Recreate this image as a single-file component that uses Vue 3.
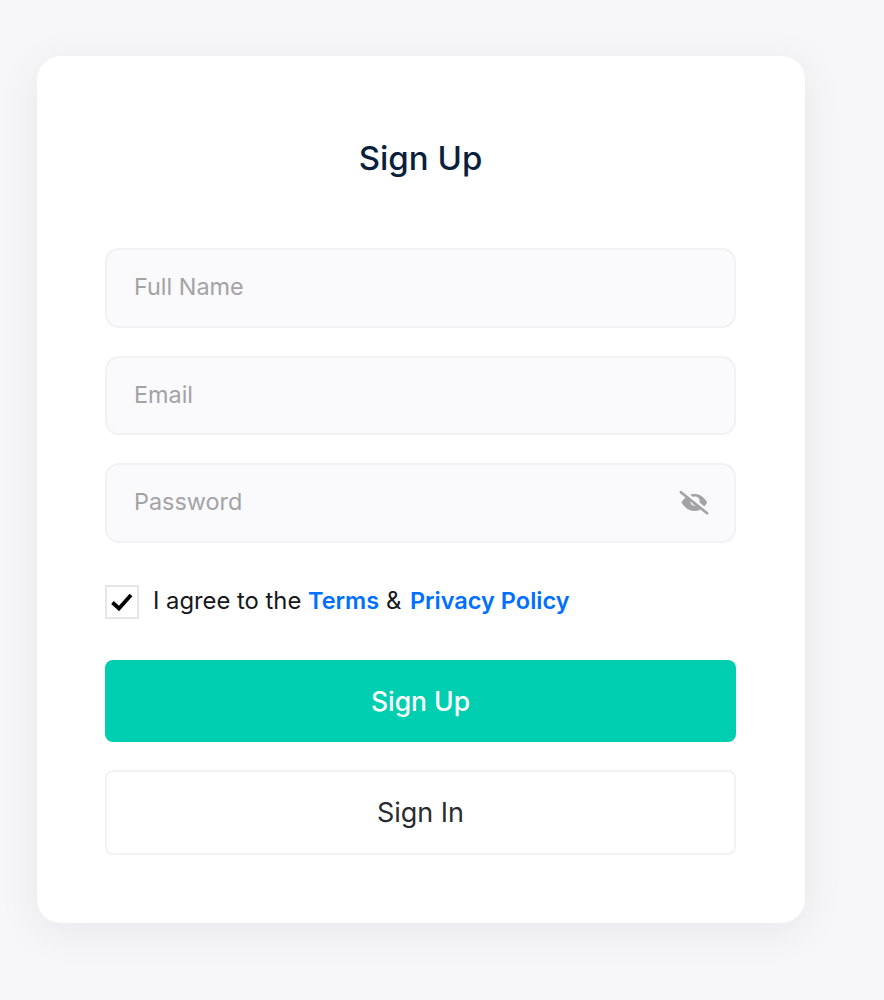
<template>
  <div class="page">
    <form class="card" @submit.prevent>
      <h1 class="card__title">Sign Up</h1>

      <div v-for="field in fields" :key="field" class="field">
        <span class="field__placeholder">{{ field }}</span>
        <!-- Eye-off icon on the password field -->
        <svg
          v-if="field === 'Password'"
          class="field__icon"
          viewBox="0 0 32 26"
          aria-hidden="true"
        >
          <path
            d="M2.500 13C7 6.500 11 4 16.500 4S26 6.500 30 13C26 19.500 22 22 16.500 22S7 19.500 2.500 13Z"
            fill="#a3a3a6"
          />
          <circle cx="17" cy="11.500" r="5" fill="#fafafc" />
          <circle cx="17" cy="13" r="2.600" fill="#a3a3a6" />
          <path d="M4 0 31 22.500" stroke="#fafafc" stroke-width="3" />
          <path d="M2 2 30 24.500" stroke="#a3a3a6" stroke-width="2.800" stroke-linecap="round" />
        </svg>
      </div>

      <label class="agree">
        <span class="agree__box">
          <svg viewBox="0 0 22 18" aria-hidden="true">
            <path d="M1.500 9.500 8 15.500 20 2" fill="none" stroke="#000" stroke-width="3.800" />
          </svg>
        </span>
        <span class="agree__text">I agree to the <a class="agree__link">Terms</a> &amp; <a class="agree__link">Privacy Policy</a></span>
      </label>

      <button type="submit" class="btn btn--primary">Sign Up</button>
      <button type="button" class="btn btn--outline">Sign In</button>
    </form>
  </div>
</template>

<script setup>
const fields = ['Full Name', 'Email', 'Password']
</script>

<style>
html,
body {
  margin: 0;
  background: #f7f7f9;
}
</style>

<style scoped>
.page {
  width: 884px;
  height: 1000px;
  box-sizing: border-box;
  padding: 56px 0 0 37px;
  font-family: Inter, "Liberation Sans", sans-serif;
  overflow: hidden;
}

.card {
  width: 768px;
  height: 867px;
  box-sizing: border-box;
  padding: 80px 69px 0 68px;
  background: #fff;
  border-radius: 24px;
  box-shadow: 0 8px 44px rgba(20, 24, 50, 0.07);
}

.card__title {
  margin: 0 0 67px;
  font-size: 33px;
  line-height: 45px;
  font-weight: 450;
  text-align: center;
  color: #0a1f3d;
}

.field {
  display: flex;
  align-items: center;
  justify-content: space-between;
  height: 79.500px;
  box-sizing: border-box;
  margin-bottom: 28px;
  padding: 0 25px 0 27px;
  background: #fafafc;
  border: 2px solid #f2f2f5;
  border-radius: 14px;
}

.field__placeholder {
  position: relative;
  top: -1px;
  font-size: 23.400px;
  color: #a3a3a6;
}

.field__icon {
  width: 30px;
  height: 25px;
}

.agree {
  display: flex;
  align-items: center;
  gap: 14px;
  height: 36px;
  margin: 41px 0 40.500px;
  color: #17181c;
}

.agree__text {
  font-size: 23.800px;
  line-height: 32px;
  margin-top: -1px;
}

.agree__box {
  display: flex;
  align-items: center;
  justify-content: center;
  width: 34px;
  height: 34px;
  box-sizing: border-box;
  border: 2px solid #e5e5ea;
}

.agree__box svg {
  width: 22px;
  height: 18px;
}

.agree__link {
  font-size: 23.500px;
  font-weight: 600;
  color: #0070ff;
}

.agree__link + .agree__link {
  margin-left: 2px;
}

.btn {
  display: block;
  width: 100%;
  box-sizing: border-box;
  font-family: inherit;
  border-radius: 8px;
}

.btn--primary {
  height: 82px;
  margin-bottom: 28px;
  font-size: 26.500px;
  font-weight: 500;
  color: #fff;
  background: #00ceb0;
  border: none;
}

.btn--outline {
  height: 84.500px;
  font-size: 27px;
  color: #2b2c30;
  background: #fff;
  border: 2px solid #f2f2f5;
}
</style>
